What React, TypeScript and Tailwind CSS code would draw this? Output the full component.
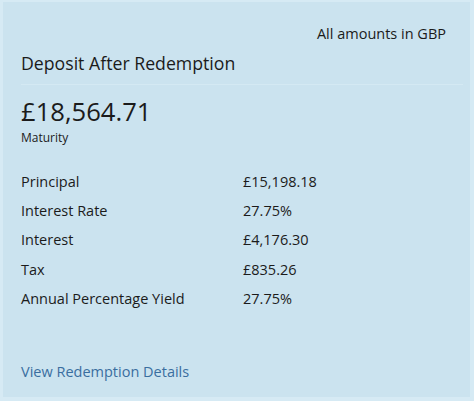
const rows = [
  { label: "Principal", value: "£15,198.18" },
  { label: "Interest Rate", value: "27.75%" },
  { label: "Interest", value: "£4,176.30" },
  { label: "Tax", value: "£835.26" },
  { label: "Annual Percentage Yield", value: "27.75%" },
]

export default function App() {
  return (
    <div className="w-[474px] h-[401px] bg-[#f4f8fa] font-['Open_Sans',sans-serif] text-[#1b1b1b]">
      <div className="h-full flex flex-col bg-[#cbe3ef] border-l-[3px] border-t-2 border-r-4 border-b-4 border-[#d6eaf4]">
        <div className="flex justify-end pr-6 pt-[22px] text-[14.5px] leading-5">All amounts in GBP</div>
        <div className="pl-[18px] pr-[7px] pt-[5px]">
          <h2 className="text-[17.7px] leading-7">Deposit After Redemption</h2>
          <div className="mt-[7px] h-px bg-[#d4e9f3]" />
        </div>
        <div className="pl-[18px] pt-[12px]">
          <div className="text-[25.6px] leading-[30px]">£18,564.71</div>
          <div className="mt-[3px] text-[12px] leading-4">Maturity</div>
        </div>
        <div className="pl-[18px] pt-[21px] flex flex-col">
          {rows.map((r) => (
            <div key={r.label} className="flex h-[29.3px] items-center text-[14.5px]">
              <span className="w-[222px]">{r.label}</span>
              <span>{r.value}</span>
            </div>
          ))}
        </div>
        <div className="pl-[18px] mt-auto pb-[14px]">
          <a href="#" className="text-[14.5px] leading-5 text-[#3a6e9f]">View Redemption Details</a>
        </div>
      </div>
    </div>
  )
}
